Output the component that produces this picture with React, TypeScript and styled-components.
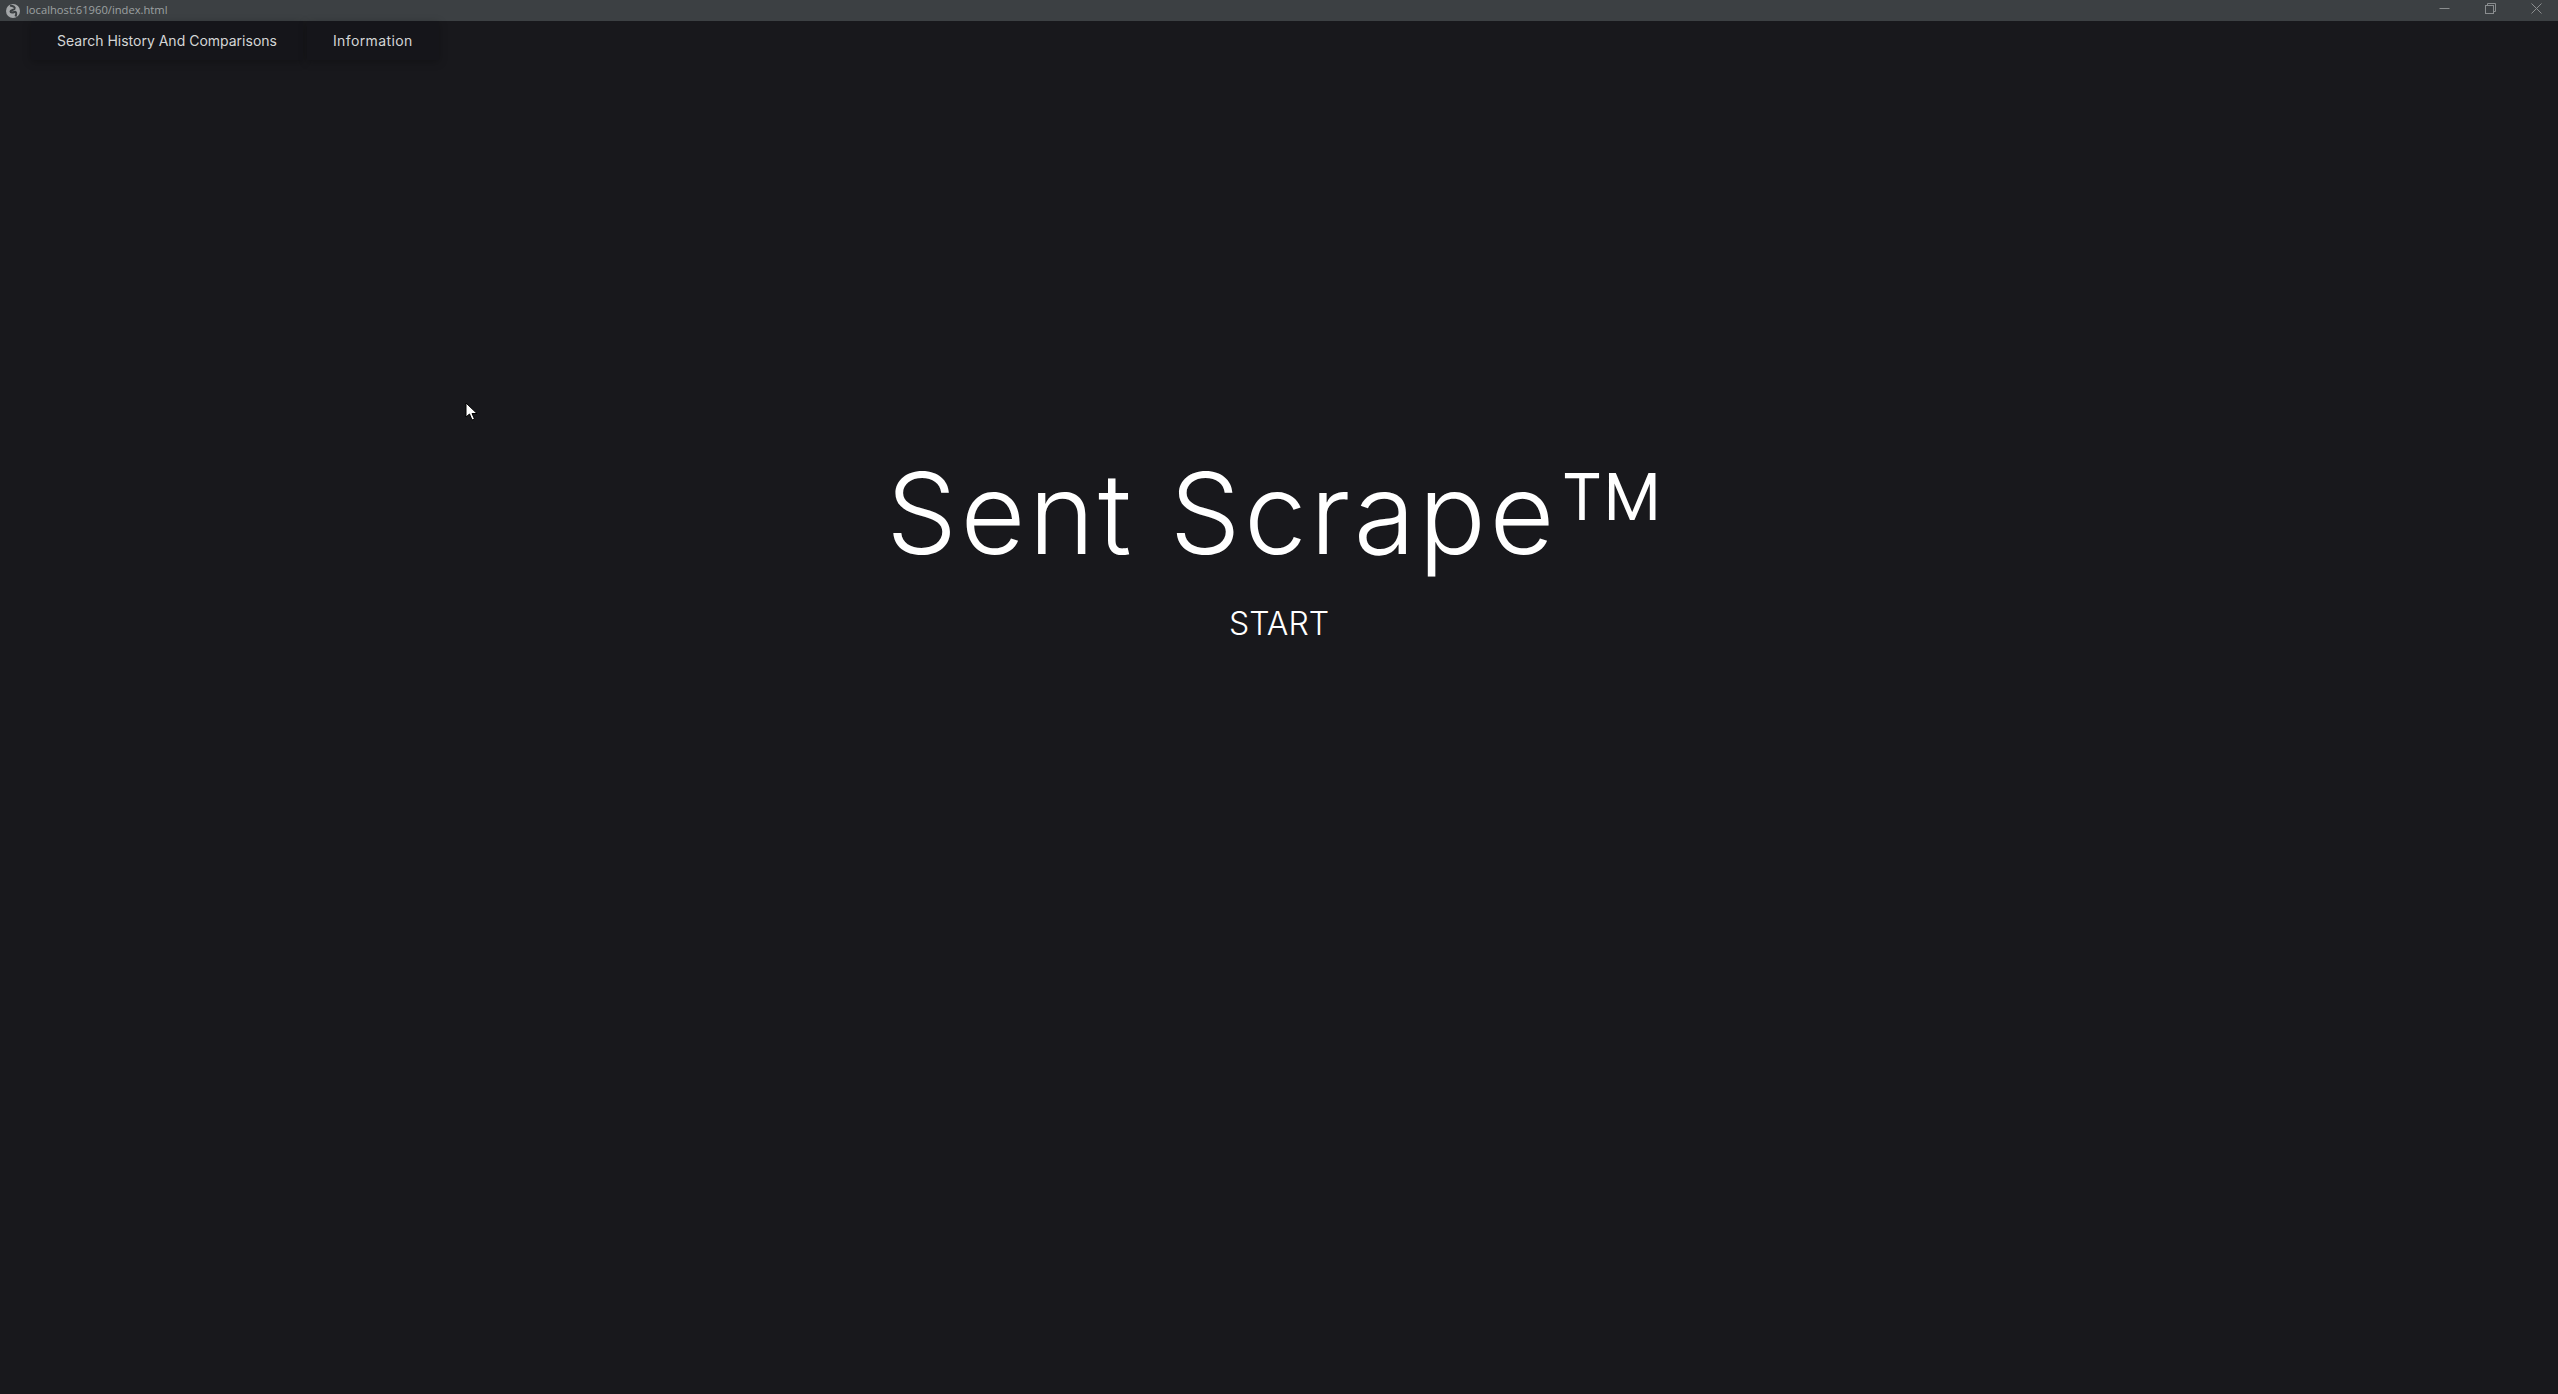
import React from "react";
import styled, { createGlobalStyle } from "styled-components";

const GlobalStyle = createGlobalStyle`
  html, body {
    margin: 0;
    padding: 0;
    height: 100%;
    background: #18181c;
    overflow: hidden;
  }
  #root {
    height: 100%;
  }
`;

const Page = styled.div`
  position: relative;
  display: flex;
  flex-direction: column;
  height: 100vh;
  background: #18181c;
  font-family: "Inter", "Liberation Sans", sans-serif;
`;

const TitleBar = styled.div`
  display: flex;
  align-items: center;
  flex: none;
  height: 21px;
  padding-left: 6px;
  background: #3c4043;
`;

const Address = styled.span`
  margin: 0 0 2px 6px;
  font-family: "Open Sans", sans-serif;
  font-size: 11.2px;
  color: #9da0a2;
`;

const WindowButtons = styled.div`
  display: flex;
  align-items: center;
  gap: 35px;
  margin-left: auto;
  padding: 0 16px 4px 0;
`;

const MenuBar = styled.nav`
  display: flex;
  flex: none;
  gap: 4px;
  height: 39px;
  padding-left: 31px;
`;

const MenuButton = styled.button<{ $spacing: number }>`
  height: 39px;
  padding: 0 26px;
  border: 0;
  background: #15151a;
  box-shadow: 0 2px 8px rgba(0, 0, 0, 0.25);
  font-family: "Inter", sans-serif;
  font-size: 14px;
  font-weight: 400;
  letter-spacing: ${(p) => p.$spacing}px;
  color: #d4d5d6;
`;

const Hero = styled.main`
  display: flex;
  flex-direction: column;
  align-items: center;
  padding-top: 385px;
`;

const Title = styled.h1`
  margin: 0 0 0 -8px;
  font-size: 112px;
  font-weight: 350;
  line-height: 136px;
  letter-spacing: 3.4px;
  color: #ffffff;
`;

const Trademark = styled.span`
  font-size: 180px;
  font-weight: 200;
  line-height: 0;
  letter-spacing: 0;
  vertical-align: -50px;
`;

const StartButton = styled.button`
  margin-top: 21px;
  padding: 0;
  border: 0;
  background: none;
  font-family: "Inter", sans-serif;
  font-size: 32px;
  font-weight: 300;
  line-height: 44px;
  color: #ffffff;
`;

const Cursor = styled.svg`
  position: absolute;
  left: 465px;
  top: 402px;
`;

function Globe() {
  return (
    <svg width="14" height="14" viewBox="0 0 14 14">
      <circle cx="7" cy="7" r="7" fill="#a4a7a9" />
      <path
        d="M4 1.5 C7 2 9.5 3 8.5 5 C7.5 6.5 4.5 5.5 4.5 7.5 C4.5 9 7 8.5 8.5 8 C10 7.5 11 9 9.5 12.5"
        fill="none"
        stroke="#3c4043"
        strokeWidth="2"
      />
    </svg>
  );
}

export default function App() {
  return (
    <>
      <GlobalStyle />
      <Page>
        <TitleBar>
          <Globe />
          <Address>localhost:61960/index.html</Address>
          <WindowButtons>
            <svg width="11" height="11" viewBox="0 0 11 11" stroke="#8a8d8f" fill="none">
              <path d="M0.5 5.5 H10.5" />
            </svg>
            <svg width="11" height="11" viewBox="0 0 11 11" stroke="#8a8d8f" fill="none">
              <rect x="0.5" y="2.5" width="8" height="8" />
              <path d="M2.5 2.5 V0.5 H10.5 V8.5 H8.5" />
            </svg>
            <svg width="11" height="11" viewBox="0 0 11 11" stroke="#8a8d8f" fill="none">
              <path d="M0.5 0.5 L10.5 10.5 M10.5 0.5 L0.5 10.5" />
            </svg>
          </WindowButtons>
        </TitleBar>
        <MenuBar>
          <MenuButton $spacing={0}>Search History And Comparisons</MenuButton>
          <MenuButton $spacing={0.4}>Information</MenuButton>
        </MenuBar>
        <Hero>
          <Title>
            Sent Scrape<Trademark>™</Trademark>
          </Title>
          <StartButton>START</StartButton>
        </Hero>
        <Cursor width="14" height="20" viewBox="0 0 14 20">
          <path d="M1 1 V15 L4.5 12 L7 18 L9.5 17 L7 11.5 H12 Z" fill="#ffffff" stroke="#000000" strokeWidth="1" />
        </Cursor>
      </Page>
    </>
  );
}
